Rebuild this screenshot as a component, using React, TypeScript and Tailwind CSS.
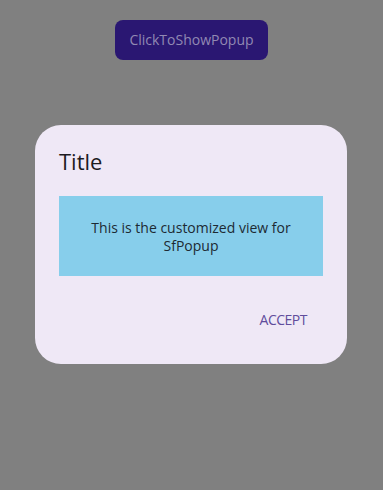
import React from "react";

export default function App() {
  return (
    <div className="w-[383px] h-[490px] bg-[#808080] flex flex-col items-center" style={{ fontFamily: '"Open Sans", sans-serif' }}>
      <button className="mt-5 w-[153px] h-[40px] rounded-[8px] bg-[#2a1772] text-[#9189b3] text-[14px] leading-[20px]">
        ClickToShowPopup
      </button>
      <div className="mt-[65px] ml-[-1px] w-[312px] h-[239px] rounded-[26px] bg-[#efe8f6] flex flex-col px-6 pt-[22px]">
        <div className="text-[22px] leading-[28px] text-[#1c1b1f]">Title</div>
        <div className="mt-[21px] h-[80px] bg-[#87ceeb] flex items-center justify-center text-center text-[14px] leading-[18.5px] text-[#1d2a33] px-4 pt-[2px]">
          This is the customized view for SfPopup
        </div>
        <div className="mt-[34px] flex justify-end pr-4">
          <span className="text-[14px] leading-[20px] tracking-[-0.5px] text-[#604c9c]">ACCEPT</span>
        </div>
      </div>
    </div>
  );
}
